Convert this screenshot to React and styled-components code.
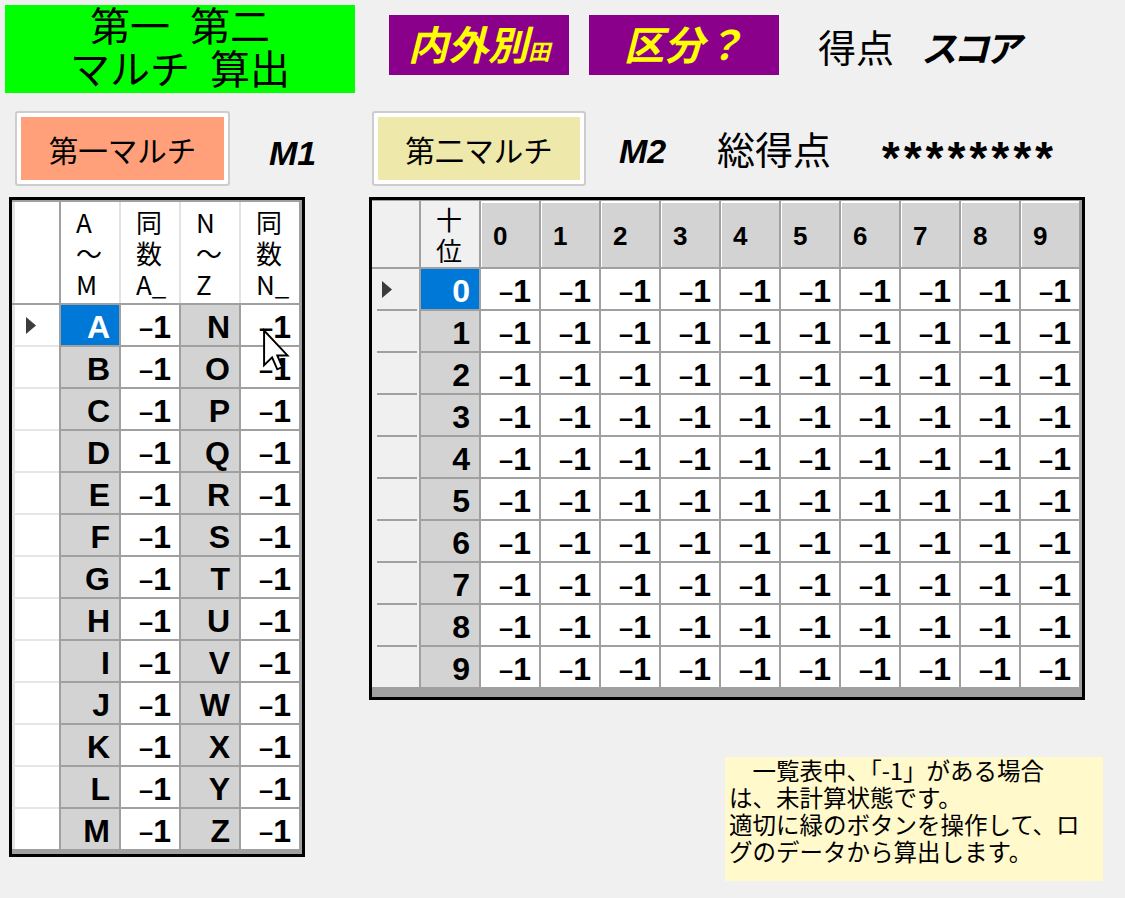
import React from 'react';
import styled, { createGlobalStyle } from 'styled-components';

const JP = `"Noto Sans CJK JP", "Noto Sans", sans-serif`;
const LAT = `"Liberation Sans", Arial, sans-serif`;

const GlobalStyle = createGlobalStyle`
  html, body { margin: 0; padding: 0; background: #f0f0f0; }
  body { font-family: ${JP}; color: #000; }
  * { box-sizing: border-box; }
`;

const Page = styled.div`
  position: relative;
  width: 1125px;
  height: 898px;
  background: #f0f0f0;
  overflow: hidden;
`;

const TopRow = styled.div`
  display: flex;
  align-items: flex-start;
  padding: 5px 0 0 5px;
  height: 93px;
`;

const GreenBox = styled.div`
  width: 350px;
  height: 88px;
  background: #00ff00;
  display: flex;
  flex-direction: column;
  justify-content: center;
  align-items: center;
  padding-bottom: 6px;
  font-family: ${JP};
  font-size: 40px;
  line-height: 43px;
  word-spacing: 11px;
  white-space: nowrap;
`;

const PurpleButton = styled.div`
  width: ${p => p.$w}px;
  margin-left: ${p => p.$ml}px;
  margin-top: 10px;
  height: 60px;
  background: #8b008b;
  color: #ffff00;
  font-family: ${JP};
  font-weight: 700;
  font-style: italic;
  font-size: 40px;
  line-height: 56px;
  padding-bottom: 4px;
  text-align: center;
  white-space: nowrap;
  overflow: hidden;
`;

const SmallGlyph = styled.span`
  font-size: 22px;
`;

const Label = styled.div`
  width: ${p => (p.$w ? `${p.$w}px` : 'auto')};
  margin-left: ${p => p.$ml || 0}px;
  margin-top: ${p => p.$mt || 0}px;
  font-family: ${p => (p.$latin ? LAT : JP)};
  font-size: ${p => p.$size}px;
  font-weight: ${p => (p.$bold ? 700 : 400)};
  font-style: ${p => (p.$italic ? 'italic' : 'normal')};
  letter-spacing: ${p => p.$ls || 0}px;
  line-height: 40px;
  white-space: nowrap;
`;

const SecondRow = styled.div`
  display: flex;
  align-items: flex-start;
  margin-top: 18px;
  padding-left: 15px;
  height: 75px;
`;

const MultiButton = styled.div`
  width: ${p => p.$w}px;
  margin-left: ${p => p.$ml || 0}px;
  height: 75px;
  border: 2px solid #cdcdcd;
  border-radius: 3px;
  background: ${p => p.$bg};
  box-shadow: inset 0 0 0 4px #ffffff;
  display: flex;
  align-items: center;
  justify-content: center;
  font-family: ${JP};
  font-size: 29.5px;
  white-space: nowrap;
`;

const GridsRow = styled.div`
  display: flex;
  align-items: flex-start;
  margin-top: 11px;
  padding-left: 9px;
`;

const RightColumn = styled.div`
  display: flex;
  flex-direction: column;
  align-items: flex-start;
  margin-left: 64px;
`;

const Frame = styled.div`
  display: flex;
  flex-direction: column;
  gap: 2px;
  border: 3px solid #000;
  background: #a0a0a0;
  padding: ${p => p.$pad};
`;

const GridRow = styled.div`
  display: grid;
  grid-template-columns: 47px repeat(${p => p.$n}, 58px);
  column-gap: 2px;
  height: ${p => p.$h}px;
`;

const Corner = styled.div`
  background: ${p => p.$bg};
  box-shadow: ${p => (p.$strip ? 'inset 3px 0 0 #e4e4e4' : 'none')};
`;

const StackHead = styled.div`
  background: ${p => p.$bg || '#ffffff'};
  display: flex;
  flex-direction: column;
  justify-content: center;
  padding-left: 15px;
  font-family: ${JP};
  font-size: 26px;
  line-height: 31px;
  white-space: pre-line;
  &:not(:last-child) {
    box-shadow: ${p => (p.$sep ? `2px 0 0 ${p.$sep}` : 'none')};
  }
`;

const ColHead = styled.div`
  background: #d3d3d3;
  box-shadow: inset 1px 2px 0 #ffffff;
  display: flex;
  align-items: center;
  padding: 4px 0 0 12px;
  font-family: ${LAT};
  font-weight: 700;
  font-size: 26px;
`;

const RowHead = styled.div`
  position: relative;
  background: ${p => (p.$variant === 'left' ? '#ffffff' : '#f0f0f0')};
  display: flex;
  align-items: center;
  padding-left: ${p => (p.$variant === 'left' ? 14 : 10)}px;
  box-shadow: ${p =>
    p.$variant === 'left'
      ? `inset 3px 0 0 #e4e4e4${p.$last ? '' : ', 0 2px 0 #e6e6e6'}`
      : p.$last
      ? 'none'
      : '0 2px 0 #f0f0f0'};
  &::after {
    content: '';
    display: ${p => (p.$variant === 'right' && !p.$last ? 'block' : 'none')};
    position: absolute;
    left: 5px;
    right: 2px;
    bottom: -2px;
    height: 2px;
    background: #a0a0a0;
  }
`;

const Cell = styled.div`
  height: 40px;
  padding: 4px ${p => p.$pr}px 0 0;
  background: ${p => (p.$selected ? '#0078d7' : p.$key ? '#d3d3d3' : '#ffffff')};
  color: ${p => (p.$selected ? '#ffffff' : '#000000')};
  text-align: right;
  font-family: ${LAT};
  font-weight: 700;
  font-size: 32px;
  line-height: 36px;
  white-space: nowrap;
`;

const Dash = styled.span`
  display: inline-block;
  font-weight: 400;
  transform: scaleX(1.6);
  transform-origin: 87% 50%;
`;

const Note = styled.div`
  margin-top: 57px;
  margin-left: 356px;
  width: 378px;
  height: 124px;
  background: #fff9cc;
  padding: 0 0 0 4px;
  font-family: ${JP};
  font-size: 23.5px;
  line-height: 27px;
  white-space: nowrap;
`;

const Cursor = styled.svg`
  position: absolute;
  left: 263px;
  top: 329px;
  width: 26px;
  height: 42px;
  overflow: visible;
`;

const Triangle = () => (
  <svg width="10" height="17" viewBox="0 0 10 17">
    <polygon points="0,0 10,8.5 0,17" fill="#3c3c3c" />
  </svg>
);

const MinusOne = () => (
  <>
    <Dash>-</Dash>1
  </>
);

const lettersA = 'ABCDEFGHIJKLM'.split('');
const lettersN = 'NOPQRSTUVWXYZ'.split('');
const digits = [0, 1, 2, 3, 4, 5, 6, 7, 8, 9];

function LetterGrid() {
  return (
    <Frame $pad="2px 3px 5px 0">
      <GridRow $n={4} $h={101}>
        <Corner $bg="#ffffff" $strip />
        <StackHead $sep="#e3e3e3">{'A\n～\nM'}</StackHead>
        <StackHead $sep="#e3e3e3">{'同\n数\nA_'}</StackHead>
        <StackHead $sep="#e3e3e3">{'N\n～\nZ'}</StackHead>
        <StackHead $sep="#e3e3e3">{'同\n数\nN_'}</StackHead>
      </GridRow>
      {lettersA.map((l, i) => (
        <GridRow key={l} $n={4} $h={40}>
          <RowHead $variant="left" $last={i === lettersA.length - 1}>
            {i === 0 && <Triangle />}
          </RowHead>
          <Cell $key $selected={i === 0} $pr={9}>{l}</Cell>
          <Cell $pr={8}><MinusOne /></Cell>
          <Cell $key $pr={9}>{lettersN[i]}</Cell>
          <Cell $pr={8}><MinusOne /></Cell>
        </GridRow>
      ))}
    </Frame>
  );
}

function ScoreGrid() {
  return (
    <Frame $pad="1px 3px 10px 0">
      <GridRow $n={11} $h={66}>
        <Corner $bg="#f0f0f0" />
        <StackHead $bg="#f0f0f0">{'十\n位'}</StackHead>
        {digits.map(d => (
          <ColHead key={d}>{d}</ColHead>
        ))}
      </GridRow>
      {digits.map((r, i) => (
        <GridRow key={r} $n={11} $h={40}>
          <RowHead $variant="right" $last={i === digits.length - 1}>
            {i === 0 && <Triangle />}
          </RowHead>
          <Cell $key $selected={i === 0} $pr={9}>{r}</Cell>
          {digits.map(c => (
            <Cell key={c} $pr={8}><MinusOne /></Cell>
          ))}
        </GridRow>
      ))}
    </Frame>
  );
}

export default function App() {
  return (
    <Page>
      <GlobalStyle />
      <TopRow>
        <GreenBox>
          <div>第一 第二</div>
          <div>マルチ 算出</div>
        </GreenBox>
        <PurpleButton $w={180} $ml={34}>
          内外別<SmallGlyph>田</SmallGlyph>
        </PurpleButton>
        <PurpleButton $w={190} $ml={20}>区分？</PurpleButton>
        <Label $ml={39} $mt={21} $w={103} $size={38}>得点</Label>
        <Label $mt={21} $size={36} $bold $italic $ls={-4}>スコア</Label>
      </TopRow>
      <SecondRow>
        <MultiButton $w={215} $bg="#ffa07a">第一マルチ</MultiButton>
        <Label $ml={39} $mt={22} $w={64} $latin $bold $italic $size={34}>M1</Label>
        <MultiButton $w={214} $ml={39} $bg="#eee8aa">第二マルチ</MultiButton>
        <Label $ml={33} $mt={20} $w={98} $latin $bold $italic $size={34}>M2</Label>
        <Label $mt={17} $w={163} $size={38}>総得点</Label>
        <Label $mt={27} $latin $bold $italic $size={46} $ls={4}>********</Label>
      </SecondRow>
      <GridsRow>
        <LetterGrid />
        <RightColumn>
          <ScoreGrid />
          <Note>
            <div>　一覧表中、「-1」がある場合</div>
            <div>は、未計算状態です。</div>
            <div>適切に緑のボタンを操作して、ロ</div>
            <div>グのデータから算出します。</div>
          </Note>
        </RightColumn>
      </GridsRow>
      <Cursor viewBox="0 0 12 19">
        <polygon
          points="0.5,0.5 0.5,16.5 4.2,12.9 6.6,18.4 8.9,17.4 6.6,12 11.3,12"
          fill="#ffffff"
          stroke="#000000"
          strokeWidth="0.9"
          strokeLinejoin="miter"
        />
      </Cursor>
    </Page>
  );
}
